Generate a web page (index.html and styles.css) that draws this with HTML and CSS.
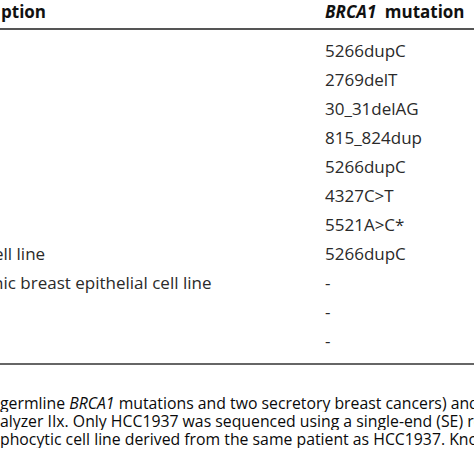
FILE: index.html
```html
<!DOCTYPE html>
<html>
<head>
<meta charset="utf-8">
<link rel="stylesheet" href="styles.css">
</head>
<body>
<div class="page">
  <div class="table">
    <div class="row head">
      <div class="desc">ption</div>
      <div class="mut"><i>BRCA1</i> mutation</div>
    </div>
    <div class="body">
      <div class="row"><div class="desc"></div><div class="mut">5266dupC</div></div>
      <div class="row"><div class="desc"></div><div class="mut">2769delT</div></div>
      <div class="row"><div class="desc"></div><div class="mut">30_31delAG</div></div>
      <div class="row"><div class="desc"></div><div class="mut">815_824dup</div></div>
      <div class="row"><div class="desc"></div><div class="mut">5266dupC</div></div>
      <div class="row"><div class="desc"></div><div class="mut">4327C&gt;T</div></div>
      <div class="row"><div class="desc"></div><div class="mut">5521A&gt;C*</div></div>
      <div class="row"><div class="desc"><span class="cut-e">e</span>ll line</div><div class="mut">5266dupC</div></div>
      <div class="row"><div class="desc"><span class="cut-n">n</span>ic breast epithelial cell line</div><div class="mut">-</div></div>
      <div class="row"><div class="desc"></div><div class="mut">-</div></div>
      <div class="row"><div class="desc"></div><div class="mut">-</div></div>
    </div>
  </div>
  <div class="caption">
    <div class="line">germline <i>BRCA1</i> mutations and two secretory breast cancers) and</div>
    <div class="line">alyzer IIx. Only HCC1937 was sequenced using a single-end (SE) reads</div>
    <div class="line">phocytic cell line derived from the same patient as HCC1937. Known</div>
  </div>
</div>
</body>
</html>
```
FILE: styles.css
```css
html, body {
  margin: 0;
  padding: 0;
  background: #ffffff;
  overflow: hidden;
}
.page {
  width: 474px;
  height: 474px;
  overflow: hidden;
  font-family: "Open Sans", "Liberation Sans", sans-serif;
}
.table {
  border-bottom: 2px solid #666;
}
.row {
  display: grid;
  grid-template-columns: 325px 1fr;
  height: 29px;
  align-items: center;
  font-size: 17px;
  color: #2a2a2a;
  white-space: nowrap;
}
.head {
  height: 28px;
  align-items: start;
  font-weight: 700;
  color: #111;
  border-bottom: 2px solid #555;
  line-height: 24px;
  word-spacing: 4px;
}
.head .desc {
  padding-left: 1px;
  word-spacing: 0;
}
.body {
  padding: 6px 0 8px;
}
.desc {
  overflow: hidden;
}
.cut-e {
  margin-left: -6px;
}
.cut-n {
  margin-left: -7px;
}
.caption {
  padding-top: 29px;
  font-size: 15.8px;
  line-height: 18px;
  font-weight: 500;
  color: #0a0a0a;
  white-space: nowrap;
}
.line {
  overflow: hidden;
  height: 18px;
}
```
